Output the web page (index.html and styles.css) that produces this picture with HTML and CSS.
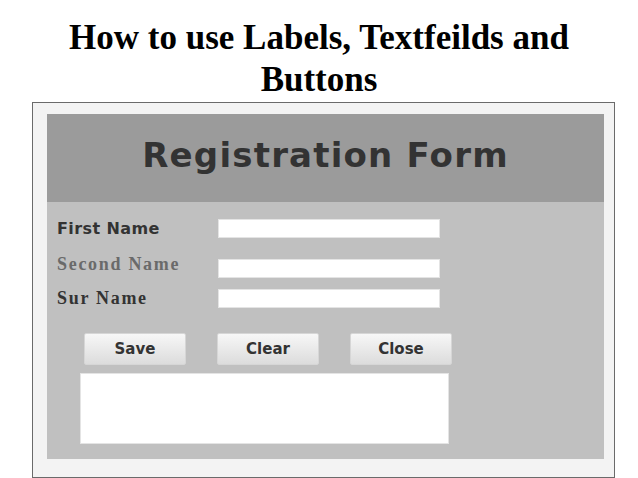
FILE: index.html
```html
<!DOCTYPE html>
<html lang="en">
<head>
<meta charset="UTF-8">
<meta name="viewport" content="width=device-width, initial-scale=1.0">
<title>How to use Labels, Textfeilds and Buttons</title>
<link rel="stylesheet" href="styles.css">
</head>
<body>
    <h1 class="slide-title">How to use Labels, Textfeilds and<br>Buttons</h1>

    <div class="frame">
        <div class="form-panel">
            <div class="form-header">
                <h2>Registration Form</h2>
            </div>
            <div class="form-body">
                <div class="form-row row-first">
                    <label class="label label-sans">First Name</label>
                    <input class="field" type="text">
                </div>
                <div class="form-row row-second">
                    <label class="label label-serif label-light">Second Name</label>
                    <input class="field" type="text">
                </div>
                <div class="form-row row-third">
                    <label class="label label-serif">Sur Name</label>
                    <input class="field" type="text">
                </div>

                <div class="buttons">
                    <button class="btn">Save</button>
                    <button class="btn">Clear</button>
                    <button class="btn">Close</button>
                </div>

                <textarea class="output"></textarea>
            </div>
        </div>
    </div>
</body>
</html>
```

FILE: styles.css
```css
body {
    margin: 0;
    padding: 0;
    background: #fff;
    font-family: "DejaVu Sans", sans-serif;
}

.slide-title {
    margin: 17px 0 1px 0;
    font-family: "Liberation Serif", serif;
    font-size: 35px;
    line-height: 42px;
    font-weight: bold;
    text-align: center;
    color: #000;
}

.frame {
    box-sizing: border-box;
    width: 583px;
    height: 376px;
    margin-left: 32px;
    padding: 11px 10px 18px 14px;
    background: #f3f3f3;
    border: 1px solid #6a6a6a;
}

.form-panel {
    display: flex;
    flex-direction: column;
    height: 100%;
}

.form-header {
    box-sizing: border-box;
    height: 88px;
    padding-bottom: 6px;
    background: #9b9b9b;
    display: flex;
    align-items: center;
    justify-content: center;
}

.form-header h2 {
    margin: 0;
    font-size: 34px;
    letter-spacing: 1.2px;
    font-weight: bold;
    color: #333;
}

.form-body {
    flex: 1;
    background: #c0c0c0;
    padding: 17px 0 0 10px;
}

.form-row {
    display: flex;
    align-items: center;
    height: 19px;
}

.row-second {
    margin-top: 21px;
}

.row-third {
    margin-top: 11px;
}

.label {
    width: 161px;
    font-weight: bold;
    color: #333;
    white-space: nowrap;
}

.label-sans {
    font-size: 16px;
    letter-spacing: 0.4px;
}

.label-serif {
    font-family: "Liberation Serif", serif;
    font-size: 18px;
    letter-spacing: 1.7px;
}

.label-light {
    color: #6a6a6a;
    position: relative;
    top: -4px;
}

.field {
    box-sizing: border-box;
    width: 222px;
    height: 19px;
    margin: 0;
    border: 1px solid #e4e4e4;
    background: #fff;
}

.buttons {
    display: flex;
    gap: 31px;
    margin: 25px 0 0 27px;
}

.btn {
    box-sizing: border-box;
    width: 102px;
    height: 32px;
    padding: 0;
    border: 1px solid #d6d6d6;
    border-radius: 2px;
    background: linear-gradient(#f7f7f7, #dcdcdc);
    font-family: "DejaVu Sans", sans-serif;
    font-size: 15px;
    font-weight: bold;
    color: #333;
}

.output {
    display: block;
    box-sizing: border-box;
    width: 369px;
    height: 71px;
    margin: 8px 0 0 23px;
    border: 1px solid #e4e4e4;
    background: #fff;
    resize: none;
}
```
